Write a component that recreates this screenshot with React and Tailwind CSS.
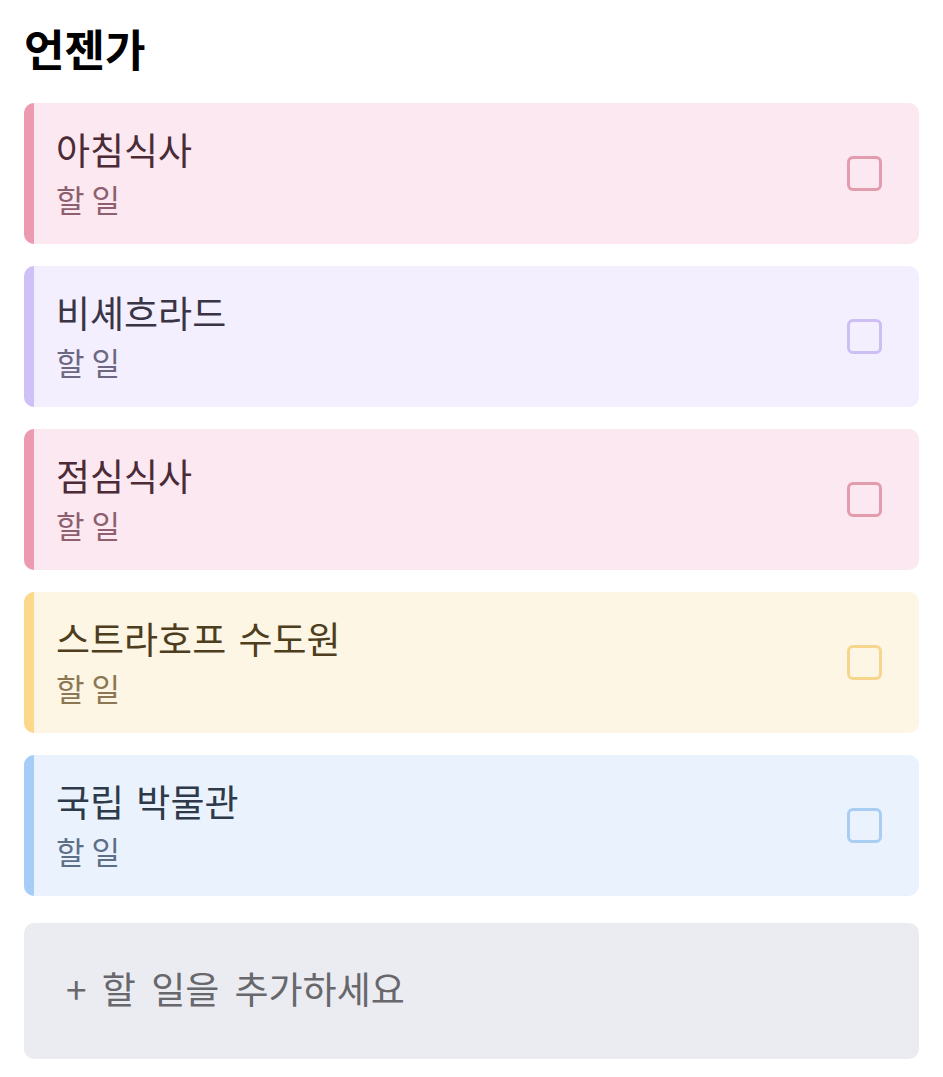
const tasks = [
  { title: "아침식사", bg: "bg-[#fce8f0]", bar: "bg-[#eb9ab0]", box: "border-[#e39bae]", title_c: "text-[#4b2b36]", sub_c: "text-[#8d5f6f]" },
  { title: "비셰흐라드", bg: "bg-[#f3effe]", bar: "bg-[#d0c0f8]", box: "border-[#cdbff3]", title_c: "text-[#3a3546]", sub_c: "text-[#6d6781]" },
  { title: "점심식사", bg: "bg-[#fce8f0]", bar: "bg-[#eb9ab0]", box: "border-[#e39bae]", title_c: "text-[#4b2b36]", sub_c: "text-[#8d5f6f]" },
  { title: "스트라호프 수도원", bg: "bg-[#fef6e5]", bar: "bg-[#fbd88a]", box: "border-[#f6d68c]", title_c: "text-[#4e3e20]", sub_c: "text-[#8b7853]" },
  { title: "국립 박물관", bg: "bg-[#eaf3fd]", bar: "bg-[#a6cdf7]", box: "border-[#a9cdf3]", title_c: "text-[#2e3a4a]", sub_c: "text-[#5d6f87]" },
];

function TaskCard({ task }) {
  return (
    <div className={`flex h-[141px] rounded-[10px] overflow-hidden ${task.bg}`}>
      <div className={`w-[10px] shrink-0 ${task.bar}`} />
      <div className="flex flex-1 items-center pl-[22px] pr-[37px]">
        <div className="flex flex-1 flex-col gap-[6px]">
          <span className={`text-[37px] leading-[44px] [word-spacing:4px] ${task.title_c}`}>{task.title}</span>
          <span className={`text-[31px] leading-[44px] ${task.sub_c}`}>할 일</span>
        </div>
        <div className={`w-[35px] h-[35px] rounded-[6px] border-[3px] ${task.box}`} />
      </div>
    </div>
  );
}

export default function App() {
  return (
    <div className="w-[943px] h-[1077px] bg-white px-6 flex flex-col" style={{ fontFamily: '"Noto Sans CJK KR", "Noto Sans", sans-serif' }}>
      <h1 className="text-[44px] font-bold text-black leading-[56px] pt-[20px] pb-[27px]">언젠가</h1>
      <div className="flex flex-col gap-[22px]">
        {tasks.map((t, i) => <TaskCard key={i} task={t} />)}
      </div>
      <div className="mt-[27px] h-[136px] rounded-[10px] bg-[#ebecf1] flex items-center pl-[42px] pb-[4px]">
        <span className="text-[37px] text-[#67676c] [word-spacing:7px]">+ 할 일을 추가하세요</span>
      </div>
    </div>
  );
}
